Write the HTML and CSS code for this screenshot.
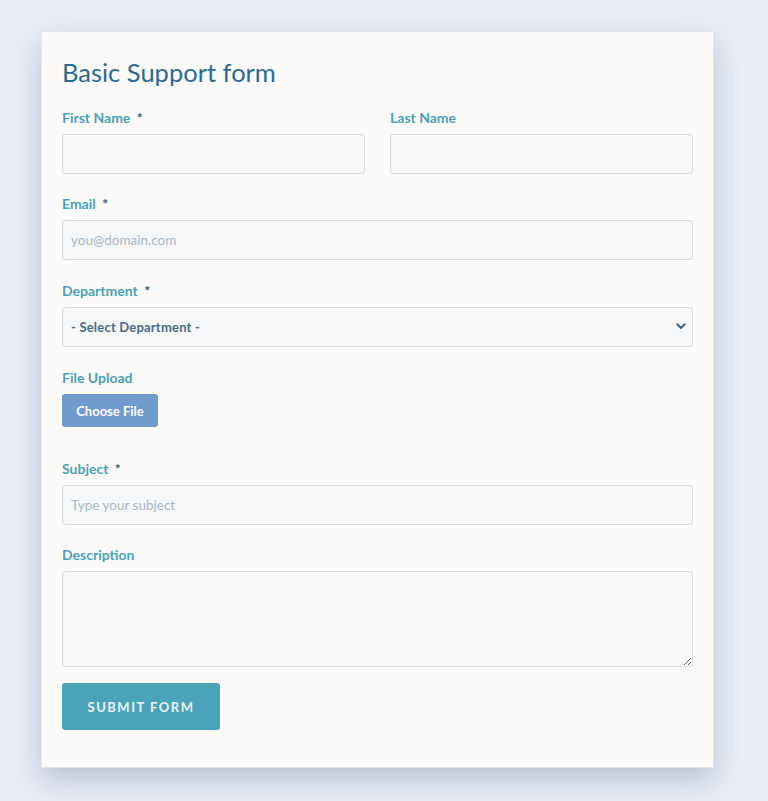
FILE: index.html
```html
<!DOCTYPE html>
<html>
<head>
<meta charset="utf-8">
<link rel="stylesheet" href="styles.css">
</head>
<body>
<div class="page">
  <form class="card">
    <h1 class="title">Basic Support form</h1>
    <div class="row">
      <div class="field">
        <label class="label">First Name <span class="req">*</span></label>
        <input class="input" type="text">
      </div>
      <div class="field">
        <label class="label">Last Name</label>
        <input class="input" type="text">
      </div>
    </div>
    <div class="field field-gap">
      <label class="label">Email <span class="req">*</span></label>
      <input class="input" type="text" placeholder="you@domain.com">
    </div>
    <div class="field field-gap">
      <label class="label">Department <span class="req">*</span></label>
      <div class="select-wrap">
        <select class="input select"><option>- Select Department -</option></select>
        <svg class="chev" width="10" height="7" viewBox="0 0 10 7"><path d="M1.3 1.3 L5 5 L8.7 1.3" fill="none" stroke="#3b6888" stroke-width="2" stroke-linecap="round" stroke-linejoin="round"/></svg>
      </div>
    </div>
    <div class="field field-file">
      <label class="label">File Upload</label>
      <button type="button" class="file-btn">Choose File</button>
    </div>
    <div class="field">
      <label class="label">Subject <span class="req">*</span></label>
      <input class="input" type="text" placeholder="Type your subject">
    </div>
    <div class="field field-last">
      <label class="label">Description</label>
      <textarea class="input textarea"></textarea>
    </div>
    <button type="button" class="submit">SUBMIT FORM</button>
  </form>
</div>
</body>
</html>
```

FILE: styles.css
```css
* { box-sizing: border-box; }
html, body { margin: 0; padding: 0; }
body {
  background: #e9edf8;
  font-family: Lato, "Noto Sans", sans-serif;
  width: 768px;
  height: 801px;
  overflow: hidden;
}
.page {
  padding: 31px 0 0 41px;
}
.card {
  width: 673px;
  height: 737px;
  background: #fbfaf8;
  border: 1px solid #e4e6ea;
  box-shadow: 0 12px 28px rgba(110, 118, 150, 0.38);
  padding: 23px 20px 0 20px;
  display: flex;
  flex-direction: column;
}
.title {
  margin: 0 0 19px 0;
  font-size: 25.5px;
  line-height: 34px;
  font-weight: 400;
  color: #2b6a93;
}
.row {
  display: flex;
  gap: 25px;
}
.row .field { flex: 1; }
.field {
  display: flex;
  flex-direction: column;
  margin-bottom: 20px;
}
.field-gap { margin-bottom: 21px; }
.label {
  font-size: 14px;
  line-height: 20px;
  font-weight: 700;
  color: #4aa1b6;
  margin-bottom: 6px;
}
.req {
  color: #2d5c7c;
  margin-left: 3px;
}
.input {
  height: 40px;
  width: 100%;
  background: #f6f7f8;
  border: 1px solid #d6dce4;
  border-radius: 3px;
  padding: 0 8px;
  font-family: Lato, "Noto Sans", sans-serif;
  font-size: 13.5px;
  color: #4d6a85;
  outline: none;
}
.input::placeholder { color: #a8b7c7; }
.select-wrap { position: relative; }
.select {
  appearance: none;
  -webkit-appearance: none;
  font-size: 13px;
  font-weight: 700;
  color: #4b6a86;
  letter-spacing: 0.2px;
}
.chev {
  position: absolute;
  right: 7px;
  top: 16px;
}
.field-file { margin-bottom: 32px; }
.file-btn {
  align-self: flex-start;
  width: 96px;
  height: 33px;
  background: #709bcc;
  border: none;
  border-radius: 3px;
  color: #ffffff;
  font-family: Lato, "Noto Sans", sans-serif;
  font-size: 13px;
  font-weight: 700;
  padding: 0;
}
.textarea {
  height: 96px;
  resize: vertical;
  padding: 8px;
}
.field-last { margin-bottom: 16px; }
.submit {
  width: 158px;
  height: 47px;
  background: #4aa3b8;
  border: none;
  border-radius: 3px;
  color: #e9f4f6;
  font-family: Lato, "Noto Sans", sans-serif;
  font-size: 13px;
  font-weight: 700;
  letter-spacing: 1.5px;
  padding: 0;
}
```
